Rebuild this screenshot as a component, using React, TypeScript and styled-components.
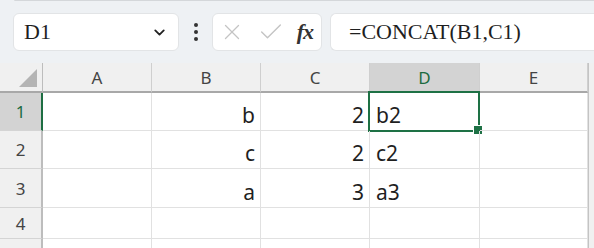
import React from "react";
import styled, { createGlobalStyle } from "styled-components";
import { ChevronDown, X, Check } from "lucide-react";

const GlobalStyle = createGlobalStyle`
  html, body {
    margin: 0;
    padding: 0;
    background: #eef1f4;
    overflow: hidden;
  }
  * {
    box-sizing: border-box;
  }
`;

const Page = styled.div`
  width: 594px;
  height: 248px;
  display: flex;
  flex-direction: column;
  overflow: hidden;
`;

const RibbonEdge = styled.div`
  height: 4px;
  margin-left: 14px;
  background: #fafbfc;
  border-bottom: 1px solid #d4d7da;
  border-bottom-left-radius: 8px;
`;

const FormulaBar = styled.div`
  display: flex;
  align-items: center;
  height: 38px;
  margin-top: 12px;
  padding-left: 13px;
`;

const Box = styled.div<{ $w?: number }>`
  height: 38px;
  width: ${(p) => (p.$w ? `${p.$w}px` : "auto")};
  flex: ${(p) => (p.$w ? "none" : "1")};
  background: #ffffff;
  border: 1px solid #e2e4e6;
  border-radius: 6px;
  display: flex;
  align-items: center;
`;

const NameBox = styled(Box)`
  padding: 0 10px 0 10px;
  justify-content: space-between;
`;

const SerifText = styled.span`
  font-family: "Liberation Serif", "DejaVu Serif", serif;
  font-size: 22px;
  color: #1f1f1f;
`;

const MoreButton = styled.div`
  width: 33px;
  display: flex;
  justify-content: center;
  align-items: center;
`;

const Dots = styled.div`
  display: flex;
  flex-direction: column;
  gap: 3px;
  span {
    width: 4px;
    height: 4px;
    border-radius: 50%;
    background: #333;
  }
`;

const FxBox = styled(Box)`
  padding: 0 6px 0 6px;
  justify-content: space-between;
  margin-right: 8px;
`;

const Fx = styled.span`
  font-family: "Liberation Serif", "DejaVu Serif", serif;
  font-style: italic;
  font-weight: bold;
  font-size: 22px;
  color: #333;
  letter-spacing: -1px;
  padding-right: 2px;
`;

const FormulaInput = styled(Box)`
  padding-left: 18px;
  border-right: none;
  border-radius: 6px 0 0 6px;
`;

const Sheet = styled.div`
  margin-top: 12px;
  display: grid;
  grid-template-columns: 43px 109px 109px 109px 110px 108px 6px;
  grid-template-rows: 30px 38px 38px 39px 31px 20px;
  background: #ffffff;
`;

const Corner = styled.div`
  background: #f0f0f0;
  border-right: 1px solid #bdbdbd;
  border-bottom: 2px solid #a8a8a8;
  position: relative;
  &::after {
    content: "";
    position: absolute;
    right: 5px;
    bottom: 4px;
    border-style: solid;
    border-width: 0 0 18px 18px;
    border-color: transparent transparent #b4b4b4 transparent;
  }
`;

const ColHead = styled.div<{ $sel?: boolean }>`
  background: ${(p) => (p.$sel ? "#d3d3d3" : "#f0f0f0")};
  border-right: 1px solid #cfcfcf;
  border-bottom: 2px solid #a8a8a8;
  display: flex;
  align-items: center;
  justify-content: center;
  font-family: "Noto Sans", "Open Sans", sans-serif;
  font-size: 17px;
  color: ${(p) => (p.$sel ? "#1c6b40" : "#444")};
  padding-top: 1px;
`;

const RowHead = styled.div<{ $sel?: boolean }>`
  background: ${(p) => (p.$sel ? "#d3d3d3" : "#f0f0f0")};
  border-right: 2px solid ${(p) => (p.$sel ? "#1e6e42" : "#bdbdbd")};
  border-bottom: 1px solid #d4d4d4;
  display: flex;
  align-items: center;
  justify-content: center;
  font-family: "Noto Sans", "Open Sans", sans-serif;
  font-size: 17px;
  color: ${(p) => (p.$sel ? "#1c6b40" : "#444")};
`;

const Cell = styled.div<{ $align?: "left" | "right" }>`
  position: relative;
  border-right: 1px solid #e1e1e1;
  border-bottom: 1px solid #e1e1e1;
  display: flex;
  align-items: flex-end;
  justify-content: ${(p) => (p.$align === "right" ? "flex-end" : "flex-start")};
  padding: 0 5px 1px 6px;
  font-family: "Noto Sans", "Open Sans", sans-serif;
  font-size: 21px;
  line-height: 28px;
  color: #1f1f1f;
`;

const Selection = styled.div`
  position: absolute;
  left: -2px;
  top: -2px;
  right: -1px;
  bottom: -2px;
  border: 2px solid #1e7145;
  pointer-events: none;
  &::after {
    content: "";
    position: absolute;
    right: -5px;
    bottom: -5px;
    width: 8px;
    height: 8px;
    background: #1e7145;
    border: 1px solid #fff;
  }
`;

const Edge = styled.div`
  background: #f0f0f0;
  border-left: 1px solid #c4c4c4;
`;

const columns = ["A", "B", "C", "D", "E"];

// last row is only a sliver at the bottom edge, so no number shows
const rows: { n: string; b: string; c: string; d: string }[] = [
  { n: "1", b: "b", c: "2", d: "b2" },
  { n: "2", b: "c", c: "2", d: "c2" },
  { n: "3", b: "a", c: "3", d: "a3" },
  { n: "4", b: "", c: "", d: "" },
  { n: "", b: "", c: "", d: "" },
];

export default function App() {
  return (
    <Page>
      <GlobalStyle />
      <RibbonEdge />
      <FormulaBar>
        <NameBox $w={166}>
          <SerifText>D1</SerifText>
          <ChevronDown size={17} strokeWidth={2.6} color="#222" />
        </NameBox>
        <MoreButton>
          <Dots>
            <span />
            <span />
            <span />
          </Dots>
        </MoreButton>
        <FxBox $w={110}>
          <X size={26} strokeWidth={1.2} color="#c4c4c4" />
          <Check size={28} strokeWidth={1.2} color="#c4c4c4" />
          <Fx>fx</Fx>
        </FxBox>
        <FormulaInput>
          <SerifText>=CONCAT(B1,C1)</SerifText>
        </FormulaInput>
      </FormulaBar>
      <Sheet>
        <Corner />
        {columns.map((c) => (
          <ColHead key={c} $sel={c === "D"}>
            {c}
          </ColHead>
        ))}
        <Edge />
        {rows.map((r, i) => (
          <React.Fragment key={i}>
            <RowHead $sel={i === 0}>{r.n}</RowHead>
            <Cell />
            <Cell $align="right">{r.b}</Cell>
            <Cell $align="right">{r.c}</Cell>
            <Cell>
              {r.d}
              {i === 0 && <Selection />}
            </Cell>
            <Cell />
            <Edge />
          </React.Fragment>
        ))}
      </Sheet>
    </Page>
  );
}
